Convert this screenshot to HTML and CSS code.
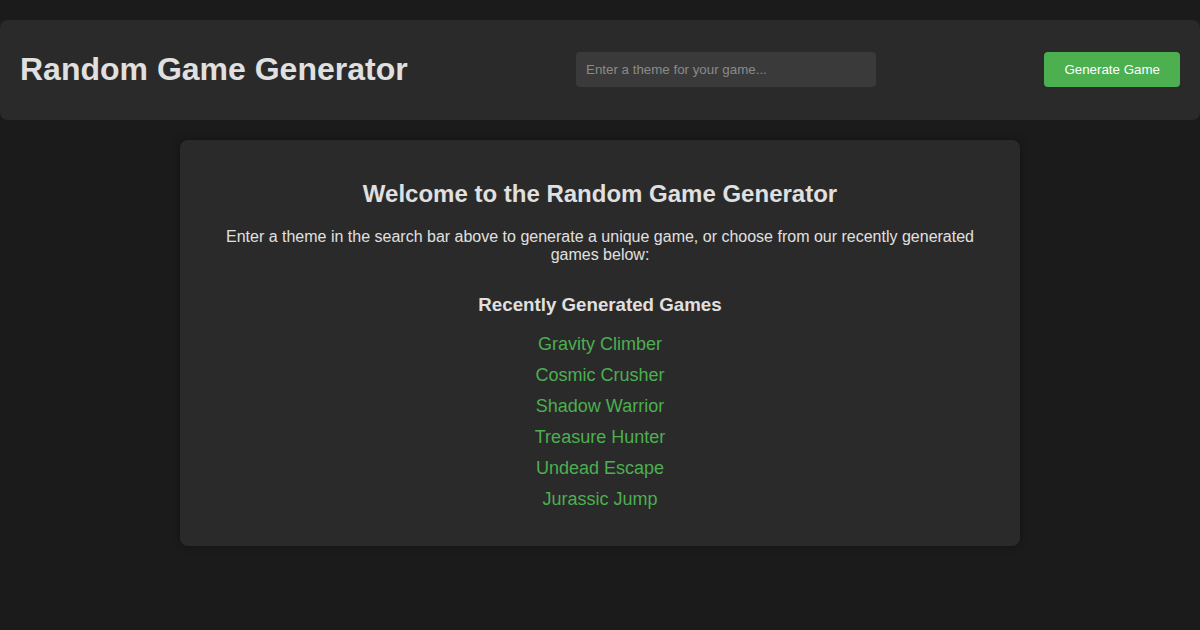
FILE: index.html
```html
<!DOCTYPE html>
<html lang="en">
<head>
  <meta charset="UTF-8" />
  <meta name="viewport" content="width=device-width, initial-scale=1.0"/>
  <title>Random Game Generator</title>
  <link rel="stylesheet" href="styles.css">
</head>
<body>

<header>
  <h1>Random Game Generator</h1>
  <input type="text" id="theme-input" placeholder="Enter a theme for your game...">
  <button id="generate-btn">Generate Game</button>
</header>

<main class="container">
  <h2>Welcome to the Random Game Generator</h2>
  <p>Enter a theme in the search bar above to generate a unique game, or choose from our recently generated games below:</p>

  <section class="recent">
    <h3>Recently Generated Games</h3>
    <ul class="game-list">
      <li><a href="#">Gravity Climber</a></li>
      <li><a href="#">Cosmic Crusher</a></li>
      <li><a href="#">Shadow Warrior</a></li>
      <li><a href="#">Treasure Hunter</a></li>
      <li><a href="#">Undead Escape</a></li>
      <li><a href="#">Jurassic Jump</a></li>
    </ul>
  </section>
</main>

</body>
</html>
```

FILE: styles.css
```css
:root {
  --bg-dark: #1b1b1b;
  --panel: #2a2a2a;
  --field: #3a3a3a;
  --text-light: #e0e0e0;
  --green: #4caf50;
}

* {
  box-sizing: border-box;
}

body {
  margin: 0;
  padding: 20px 0;
  background: var(--bg-dark);
  color: var(--text-light);
  font-family: 'Liberation Sans', Arial, sans-serif;
}

header {
  display: flex;
  justify-content: space-between;
  align-items: center;
  padding: 10px 20px;
  background: var(--panel);
  border-radius: 8px;
}

header h1 {
  font-size: 32px;
  margin: 21.44px 0;
}

header input {
  width: 300px;
  padding: 10px;
  border: none;
  border-radius: 4px;
  background: var(--field);
  color: var(--text-light);
  font-family: inherit;
  font-size: 13.333px;
}

header input::placeholder {
  color: #8a8a8a;
}

header button {
  padding: 10px 20px;
  border: none;
  border-radius: 4px;
  background: var(--green);
  color: #fff;
  font-family: inherit;
  font-size: 13.333px;
  cursor: pointer;
}

.container {
  max-width: 840px;
  margin: 20px auto 0;
  padding: 20px;
  background: var(--panel);
  border-radius: 8px;
  box-shadow: 0 0 10px rgba(0, 0, 0, 0.3);
  text-align: center;
}

.container h2 {
  font-size: 24px;
  margin: 20px 0;
}

.container p {
  font-size: 16px;
  margin: 16px 0 30px;
}

.recent h3 {
  font-size: 18.72px;
  margin: 0 0 18px;
}

.game-list {
  list-style: none;
  padding: 0;
  margin: 16px 0;
}

.game-list li {
  margin: 10px 0;
  font-size: 18px;
}

.game-list a {
  color: var(--green);
  text-decoration: none;
}
```
